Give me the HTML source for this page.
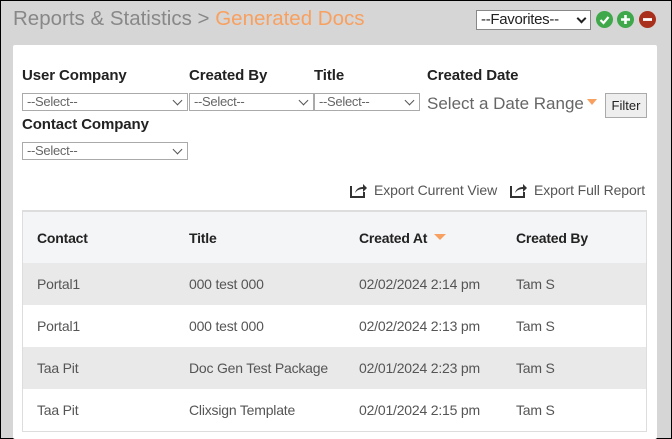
<!DOCTYPE html>
<html><head><style>
*{margin:0;padding:0;box-sizing:border-box}
body{width:672px;height:439px;overflow:hidden;font-family:"Liberation Sans",Arial,sans-serif;position:relative;background:#d6d6d6}
.frame{position:absolute;left:0;top:0;width:672px;height:439px;border:1px solid #000}
.a{position:absolute;white-space:nowrap}
.panel{position:absolute;left:13px;top:45px;width:644px;height:394px;background:#fff;border-radius:2px}
.lbl{font-weight:bold;font-size:15px;color:#222;letter-spacing:-0.1px}
.sel{position:absolute;height:18px;border:1px solid #aaa;background:#fff;font-size:13px;color:#666;padding-left:4px;line-height:16px;letter-spacing:-0.3px}
.sel:after{content:"";position:absolute;right:6px;top:3px;width:6px;height:6px;border-right:1.5px solid #555;border-bottom:1.5px solid #555;transform:rotate(45deg)}
.tbl{position:absolute;left:22px;top:210px;width:625px;height:222px;border:1px solid #ddd;border-top:2px solid #ddd}
.row{position:absolute;left:0;width:623px;height:42px;font-size:14px;color:#555;letter-spacing:-0.2px}
.row span{position:absolute;top:13px}
.hd{font-weight:bold;color:#222}
.c1{left:14px}.c2{left:166px}.c3{left:336px}.c4{left:493px}
.ic{position:absolute;width:17px;height:17px;border-radius:50%;top:11px}
</style></head><body>
<div class="frame"></div>
<div class="a" style="left:13px;top:7px;font-size:20.5px;color:#888;letter-spacing:0">Reports &amp; Statistics &gt; <span style="color:#f8a060">Generated Docs</span></div>
<div class="a" style="left:476px;top:10px;width:115px;height:20px;background:#fff;border:1px solid #888;font-size:15px;color:#222;padding-left:4px;line-height:18px;letter-spacing:-0.3px">--Favorites--<span style="position:absolute;right:5px;top:4px;width:7px;height:7px;border-right:2px solid #222;border-bottom:2px solid #222;transform:rotate(45deg)"></span></div>
<div class="ic" style="left:596px;background:#3ea84a"><svg width="17" height="17"><path d="M4.5 9l3 3 5-6" stroke="#fff" stroke-width="2.2" fill="none"/></svg></div>
<div class="ic" style="left:617px;background:#3ea84a"><svg width="17" height="17"><path d="M8.5 4v9M4 8.5h9" stroke="#fff" stroke-width="2.6"/></svg></div>
<div class="ic" style="left:639px;background:#a8301c"><svg width="17" height="17"><path d="M4 8.5h9" stroke="#fff" stroke-width="2.8"/></svg></div>
<div class="panel"></div>
<div class="a lbl" style="left:22px;top:67px">User Company</div>
<div class="a lbl" style="left:189px;top:67px">Created By</div>
<div class="a lbl" style="left:314px;top:67px">Title</div>
<div class="a lbl" style="left:427px;top:67px">Created Date</div>
<div class="sel" style="left:22px;top:93px;width:166px">--Select--</div>
<div class="sel" style="left:189px;top:93px;width:125px">--Select--</div>
<div class="sel" style="left:314px;top:93px;width:106px">--Select--</div>
<div class="a" style="left:427px;top:94px;font-size:17px;color:#666;letter-spacing:0">Select a Date Range <span style="display:inline-block;width:0;height:0;border-left:5px solid transparent;border-right:5px solid transparent;border-top:6px solid #f8a060;vertical-align:4px;margin-left:-2px"></span></div>
<div class="a" style="left:605px;top:93px;width:42px;height:25px;background:#eee;border:1px solid #aaa;font-size:13px;color:#222;text-align:center;line-height:23px">Filter</div>
<div class="a lbl" style="left:22px;top:116px">Contact Company</div>
<div class="sel" style="left:22px;top:142px;width:166px">--Select--</div>
<svg class="a" style="left:349px;top:181px" width="18" height="18"><path d="M2 5v11h13v-5" stroke="#333" stroke-width="2" fill="none"/><path d="M6 12c1-4 4-6 8-6V3l4 4-4 4V8c-3 0-6 1-8 4z" fill="#333"/></svg>
<div class="a" style="left:374px;top:182px;font-size:14px;color:#555;letter-spacing:-0.1px">Export Current View</div>
<svg class="a" style="left:509px;top:181px" width="18" height="18"><path d="M2 5v11h13v-5" stroke="#333" stroke-width="2" fill="none"/><path d="M6 12c1-4 4-6 8-6V3l4 4-4 4V8c-3 0-6 1-8 4z" fill="#333"/></svg>
<div class="a" style="left:534px;top:182px;font-size:14px;color:#555;letter-spacing:-0.1px">Export Full Report</div>
<div class="tbl">
<div class="row hd" style="top:0;height:51px;background:#f4f5f7"><span class="c1" style="top:18px">Contact</span><span class="c2" style="top:18px">Title</span><span class="c3" style="top:18px">Created At <i style="display:inline-block;width:0;height:0;border-left:6px solid transparent;border-right:6px solid transparent;border-top:6px solid #f8a060;vertical-align:3px;margin-left:3px"></i></span><span class="c4" style="top:18px">Created By</span></div>
<div class="row" style="top:51px;background:#e9e9e9"><span class="c1">Portal1</span><span class="c2">000 test 000</span><span class="c3">02/02/2024 2:14 pm</span><span class="c4">Tam S</span></div>
<div class="row" style="top:93px;background:#fff"><span class="c1">Portal1</span><span class="c2">000 test 000</span><span class="c3">02/02/2024 2:13 pm</span><span class="c4">Tam S</span></div>
<div class="row" style="top:135px;background:#e9e9e9"><span class="c1">Taa Pit</span><span class="c2">Doc Gen Test Package</span><span class="c3">02/01/2024 2:23 pm</span><span class="c4">Tam S</span></div>
<div class="row" style="top:177px;background:#fff"><span class="c1">Taa Pit</span><span class="c2">Clixsign Template</span><span class="c3">02/01/2024 2:15 pm</span><span class="c4">Tam S</span></div>
</div>
</body></html>
